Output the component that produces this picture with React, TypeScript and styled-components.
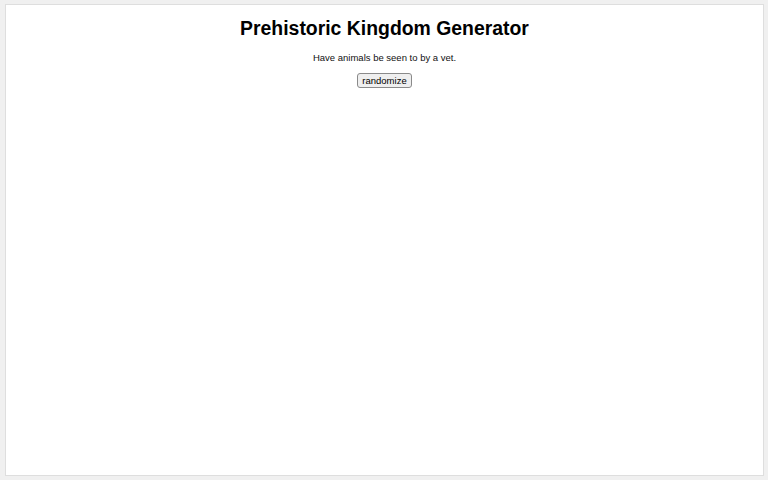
import React from "react";
import styled, { createGlobalStyle } from "styled-components";

const Global = createGlobalStyle`
  html, body { margin: 0; padding: 0; background: #f0f0f0; }
  body { font-family: "Liberation Sans", Arial, sans-serif; }
`;

const Page = styled.div`
  padding: 4px 4px 4px 5px;
  height: 480px;
  box-sizing: border-box;
  display: flex;
`;

const Card = styled.main`
  flex: 1;
  background: #fff;
  border: 1px solid #dedede;
  display: flex;
  flex-direction: column;
  align-items: center;
`;

const Title = styled.h1`
  margin: 12px 0 0;
  font-size: 19.4px;
  line-height: 23px;
  font-weight: bold;
  color: #000;
`;

const Note = styled.p`
  margin: 12px 0 0;
  font-size: 9.5px;
  line-height: 12px;
  color: #111;
`;

const Button = styled.button`
  margin-top: 9px;
  font-family: "Liberation Sans", Arial, sans-serif;
  font-size: 9.5px;
  line-height: 11px;
  padding: 1px 4px;
  background: #efefef;
  border: 1px solid #8a8a8a;
  border-radius: 3px;
  color: #000;
`;

export default function App() {
  return (
    <>
      <Global />
      <Page>
        <Card>
          <Title>Prehistoric Kingdom Generator</Title>
          <Note>Have animals be seen to by a vet.</Note>
          <Button>randomize</Button>
        </Card>
      </Page>
    </>
  );
}
